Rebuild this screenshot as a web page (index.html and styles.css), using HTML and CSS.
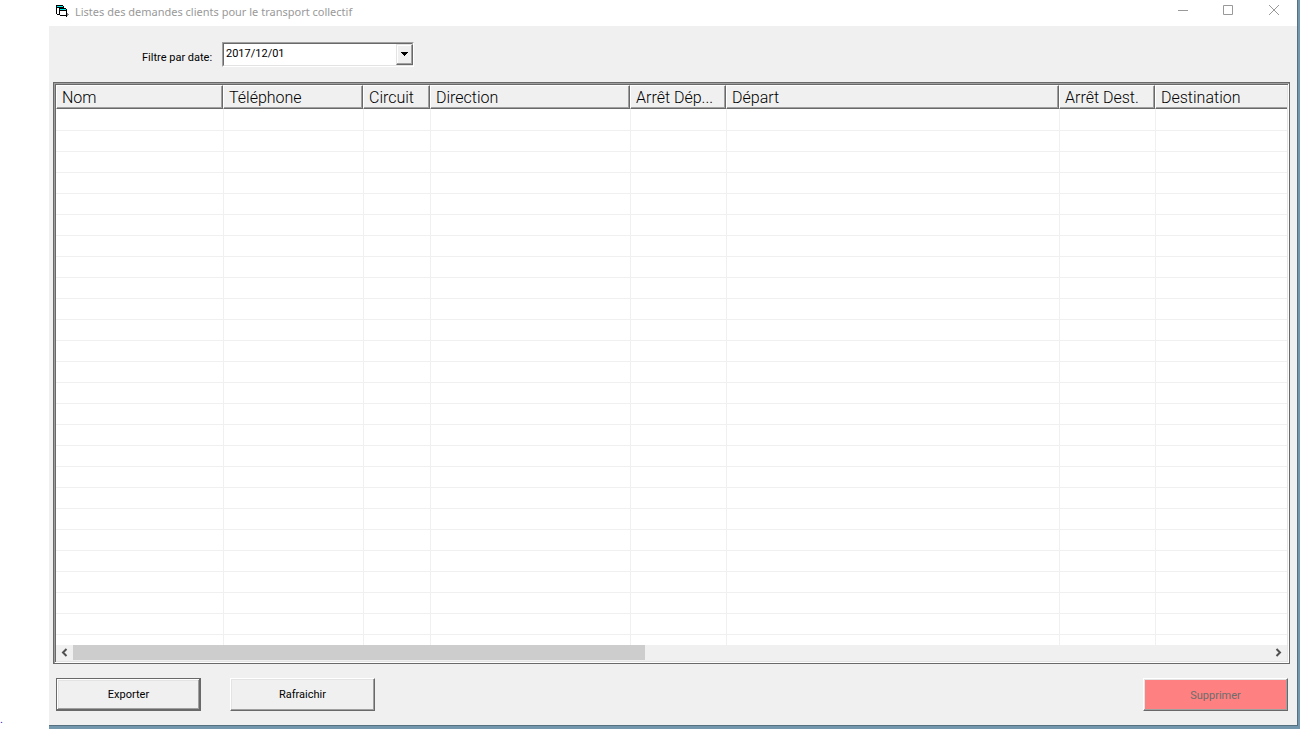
FILE: index.html
```
<!DOCTYPE html>
<html lang="fr">
<head>
<meta charset="utf-8">
<title>Listes des demandes clients pour le transport collectif</title>
<link rel="stylesheet" href="styles.css">
</head>
<body>
<div class="desktop">
  <aside class="margin">.</aside>
  <main class="window">
    <header class="titlebar">
      <svg class="app-icon" width="14" height="14" viewBox="0 0 14 14" shape-rendering="crispEdges" aria-hidden="true">
        <path fill="#000" d="M1 1h7v1h1v2h2v1h1v8h-1v-1H5v-1H2v-1H1z"/>
        <path fill="#fff" d="M2 4h2v6H2zM5 7h6v4H5z"/>
        <path fill="#00f0f0" d="M2 2h6v1H2zM5 5h6v1H5z"/>
        <path fill="#888" d="M12 9h1v1h1v1h-1v1h-1z"/>
      </svg>
      <h1 class="title">Listes des demandes clients pour le transport collectif</h1>
      <div class="controls">
        <button class="control" type="button" aria-label="Réduire"><svg width="12" height="12" viewBox="0 0 12 12"><path d="M2 6.500h10"/></svg></button>
        <button class="control" type="button" aria-label="Agrandir"><svg width="12" height="12" viewBox="0 0 12 12"><path d="M1.500 1.500h9v9h-9z"/></svg></button>
        <button class="control" type="button" aria-label="Fermer"><svg width="12" height="12" viewBox="0 0 12 12"><path d="M1 1l10 10M11 1L1 11"/></svg></button>
      </div>
    </header>

    <form class="filter">
      <label class="filter-label" for="date">Filtre par date:</label>
      <div class="combo">
        <select class="combo-select" id="date"><option>2017/12/01</option></select>
        <span class="combo-arrow"><svg width="7" height="4" viewBox="0 0 7 4" shape-rendering="crispEdges" aria-hidden="true"><path d="M0 0h7v1H6v1H5v1H4v1H3V3H2V2H1V1H0z"/></svg></span>
      </div>
    </form>

    <section class="list">
      <div class="list-inner">
        <div class="list-rows">
          <table class="grid">
            <colgroup>
              <col class="col-name"><col class="col-phone"><col class="col-circuit"><col class="col-direction">
              <col class="col-stop"><col class="col-place"><col class="col-stop"><col>
            </colgroup>
            <thead>
              <tr><th>Nom</th><th>Téléphone</th><th>Circuit</th><th>Direction</th><th>Arrêt Dép...</th><th>Départ</th><th>Arrêt Dest.</th><th>Destination</th></tr>
            </thead>
            <tbody id="rows"></tbody>
          </table>
        </div>
        <div class="scrollbar">
          <button class="scroll-button" type="button" aria-label="Défiler à gauche"><svg width="7" height="9" viewBox="0 0 7 9"><path d="M5.500 1L2 4.500 5.500 8"/></svg></button>
          <div class="scroll-track"><div class="scroll-thumb"></div></div>
          <button class="scroll-button" type="button" aria-label="Défiler à droite"><svg width="7" height="9" viewBox="0 0 7 9"><path d="M1.500 1L5 4.500 1.500 8"/></svg></button>
        </div>
      </div>
    </section>

    <footer class="actions">
      <button class="action action-default" type="button">Exporter</button>
      <button class="action" type="button">Rafraichir</button>
      <button class="action action-delete" type="button" disabled>Supprimer</button>
    </footer>
  </main>
</div>
<script src="rows.js"></script>
</body>
</html>
```
FILE: styles.css
```
* { box-sizing: border-box; }

body {
  margin: 0;
  font-family: Roboto, "Liberation Sans", Arial, sans-serif;
  font-size: 11px;
  color: #000;
  background: #fff;
}

button, select { font: inherit; color: inherit; }

.desktop {
  display: flex;
  height: 100vh;
  overflow: hidden;
}

.margin {
  width: 49px;
  flex: none;
  display: flex;
  align-items: flex-end;
  padding-bottom: 3px;
  color: #2020c0;
}

.window {
  flex: 1;
  min-width: 0;
  display: flex;
  flex-direction: column;
  margin: 0 2px 3px 0;
  background: #f0f0f0;
  border-right: 1px solid #56707f;
  border-bottom: 1px solid #56707f;
  box-shadow: 2px 0 0 #7398ad, 2px 3px 0 #7398ad, 0 3px 0 #7398ad;
}

.titlebar {
  flex: none;
  display: flex;
  align-items: center;
  height: 26px;
  padding: 0 0 4px 6px;
  background: #fff;
}

.app-icon { flex: none; }

.title {
  flex: 1;
  margin: 0;
  padding-left: 6px;
  font: 11px "Noto Sans", "Open Sans", sans-serif;
  color: #999;
}

.controls { display: flex; }

.control {
  display: flex;
  align-items: center;
  justify-content: center;
  width: 46px;
  height: 20px;
  padding: 0 0 2px;
  border: 0;
  background: none;
}

.control svg { fill: none; stroke: #999; }

.filter {
  flex: none;
  display: flex;
  align-items: center;
  gap: 12px;
  height: 56px;
  padding-left: 93px;
}

.filter-label {
  width: 68px;
  padding-top: 6px;
  white-space: nowrap;
}

.combo {
  display: flex;
  position: relative;
  width: 192px;
  height: 25px;
  border: 1px solid;
  border-color: #a0a0a0 #fff #fff #a0a0a0;
}

.combo-select {
  appearance: none;
  width: 100%;
  padding: 0 20px 2px 2px;
  border: 1px solid;
  border-color: #696969 #e3e3e3 #e3e3e3 #696969;
  border-radius: 0;
  background: #fff;
}

.combo-arrow {
  position: absolute;
  top: 1px;
  right: 0;
  bottom: 1px;
  width: 17px;
  display: flex;
  align-items: center;
  justify-content: center;
  border: 1px solid;
  border-color: #e3e3e3 #696969 #696969 #e3e3e3;
  box-shadow: inset -1px -1px 0 #a0a0a0, inset 1px 1px 0 #fff;
  background: #f0f0f0;
  pointer-events: none;
}

.list {
  flex: 1;
  min-height: 0;
  display: flex;
  margin: 0 7px 0 4px;
  border: 1px solid #696969;
}

.list-inner {
  flex: 1;
  min-width: 0;
  display: flex;
  flex-direction: column;
  padding: 2px;
  background:
    linear-gradient(#a0a0a0, #a0a0a0) top / 100% 1px no-repeat,
    linear-gradient(#a0a0a0, #a0a0a0) left / 1px 100% no-repeat,
    linear-gradient(#fff, #fff) bottom / 100% 1px no-repeat,
    linear-gradient(#fff, #fff) right / 1px 100% no-repeat,
    linear-gradient(#696969, #696969) 0 1px / 100% 1px no-repeat,
    linear-gradient(#696969, #696969) 1px 0 / 1px 100% no-repeat,
    #e3e3e3;
}

.list-rows {
  flex: 1;
  min-height: 0;
  overflow: hidden;
  background: #fff;
}

.grid {
  width: 100%;
  table-layout: fixed;
  border-collapse: separate;
  border-spacing: 0;
}

.col-name { width: 167px; }
.col-phone { width: 140px; }
.col-circuit { width: 67px; }
.col-direction { width: 200px; }
.col-stop { width: 96px; }
.col-place { width: 333px; }

.grid th {
  height: 24px;
  padding: 1px 0 0 5px;
  border: 1px solid;
  border-color: #fff #696969 #696969 #fff;
  box-shadow: inset -1px -1px 0 #a0a0a0;
  background: #f0f0f0;
  font-size: 16px;
  line-height: 20px;
  font-weight: 300;
  text-align: left;
  white-space: nowrap;
  overflow: hidden;
}

.grid th:last-child {
  border-right: 0;
  box-shadow: inset 0 -1px 0 #a0a0a0;
}

.grid td {
  height: 21px;
  padding: 0;
  border-bottom: 1px solid #f0f0f0;
}

.grid td + td { border-left: 1px solid #f0f0f0; }

.grid tbody tr:first-child td { height: 22px; }

.scrollbar {
  flex: none;
  display: flex;
  height: 16px;
  padding-bottom: 1px;
  background: #f0f0f0;
}

.scroll-button {
  display: flex;
  align-items: center;
  justify-content: center;
  width: 17px;
  padding: 0;
  border: 0;
  background: none;
}

.scroll-button svg {
  fill: none;
  stroke: #505050;
  stroke-width: 2;
}

.scroll-track { flex: 1; }

.scroll-thumb {
  width: 572px;
  height: 100%;
  background: #cdcdcd;
}

.actions {
  flex: none;
  display: flex;
  gap: 29px;
  padding: 14px 9px 14px 7px;
}

.action {
  width: 145px;
  height: 33px;
  padding: 0;
  border: 1px solid;
  border-color: #fff #696969 #696969 #fff;
  box-shadow: inset -1px -1px 0 #a0a0a0, inset 1px 1px 0 #e3e3e3;
  background: #f0f0f0;
}

.action-default {
  border-color: #696969;
  box-shadow: inset -1px -1px 0 #696969, inset 1px 1px 0 #fff, inset -2px -2px 0 #a0a0a0, inset 2px 2px 0 #e3e3e3;
}

.action-delete {
  margin-left: auto;
  padding-top: 2px;
  background: #ff8080;
  color: #6d6d6d;
}
```
FILE: rows.js
```
const body = document.getElementById("rows");
for (let r = 0; r < 60; r++) {
  const row = body.insertRow();
  for (let c = 0; c < 8; c++) row.insertCell();
}
```
